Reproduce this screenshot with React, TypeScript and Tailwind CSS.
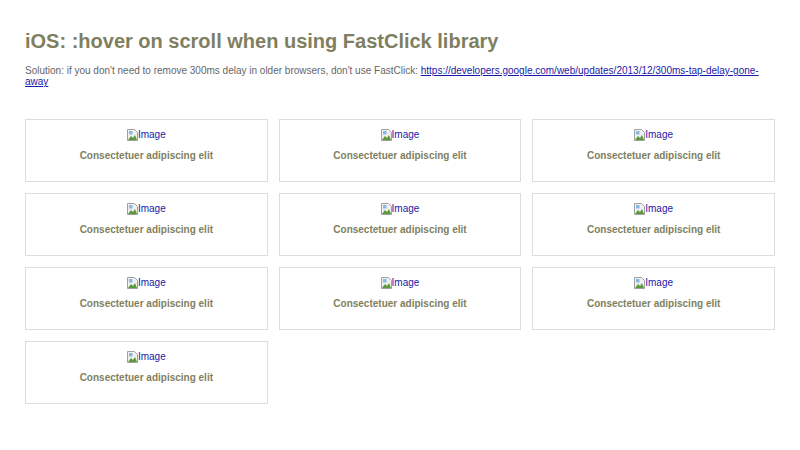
import React from "react";

function BrokenImg() {
  return (
    <svg width="11" height="12" viewBox="0 0 11 12" className="inline-block">
      <path d="M0.5 0.5h7l3 3v8h-10z" fill="#f0f0f0" stroke="#a0a0a0" strokeWidth="1" />
      <path d="M1 11l3-4 2 2 2-3 2 5z" fill="#5a9a3a" />
      <rect x="2" y="2" width="3.5" height="3.5" fill="#8ab8e0" />
    </svg>
  );
}

function Card() {
  return (
    <div className="border border-[#dddddd] h-[63px] flex flex-col items-center pt-[8px]">
      <div className="text-[10px] text-[#1a1aa8] leading-[14px] flex items-center">
        <BrokenImg />
        <span>Image</span>
      </div>
      <div className="mt-[7px] text-[10px] font-bold text-[#7f7f60] leading-[14px]">
        Consectetuer adipiscing elit
      </div>
    </div>
  );
}

export default function App() {
  return (
    <div className="px-[25px] pt-[29px] bg-white min-h-[450px]" style={{ fontFamily: '"Liberation Sans", Arial, sans-serif' }}>
      <h1 className="text-[20px] font-bold text-[#7f7f5f] leading-[24px]">
        iOS: :hover on scroll when using FastClick library
      </h1>
      <p className="mt-[12px] text-[10px] leading-[11px] text-[#666666]">
        Solution: if you don't need to remove 300ms delay in older browsers, don't use FastClick:{" "}
        <a href="#" className="text-[#1a1aa8] underline">
          https://developers.google.com/web/updates/2013/12/300ms-tap-delay-gone-away
        </a>
      </p>
      <div className="mt-[32px] grid grid-cols-3 gap-x-[11px] gap-y-[11px]">
        {Array.from({ length: 10 }).map((_, i) => (
          <Card key={i} />
        ))}
      </div>
    </div>
  );
}
